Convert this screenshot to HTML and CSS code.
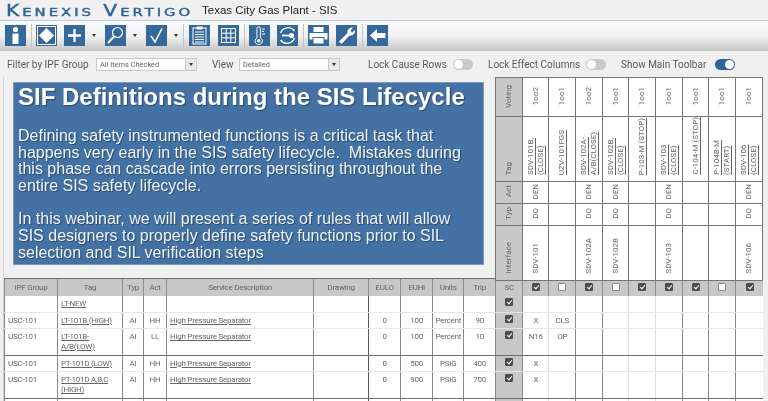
FILE: index.html
```html
<!DOCTYPE html>
<html lang="en">
<head>
<meta charset="utf-8">
<title>Kenexis Vertigo</title>
<link rel="stylesheet" href="styles.css">
</head>
<body>
<header class="titlebar">
  <span class="logo-box"><span class="logo">Kenexis Vertigo</span></span>
  <span class="plant">Texas City Gas Plant - SIS</span>
</header>
<nav class="toolbar">
  <span class="tool"><svg viewBox="0 0 21 21"><circle cx="10.5" cy="4.5" r="2.6" fill="#fff"/><rect x="7.5" y="8.5" width="6" height="10.5" fill="#fff"/></svg></span>
  <span class="sep sep-first"></span>
  <span class="tool"><svg viewBox="0 0 21 21"><rect x="1.5" y="1.5" width="18" height="18" fill="none" stroke="#fff"/><path d="M10.500 3 18 10.500 10.500 18 3 10.500Z" fill="#fff"/></svg></span>
  <span class="tool tool-gap"><svg viewBox="0 0 21 21"><path d="M9.300 4h2.400v5.300H17v2.400h-5.300V17H9.300v-5.300H4V9.300h5.300Z" fill="#fff"/></svg></span>
  <span class="caret"></span>
  <span class="tool tool-drop"><svg viewBox="0 0 21 21"><circle cx="12.500" cy="7.500" r="5" fill="none" stroke="#fff" stroke-width="1.2"/><path d="M9 11.500 3 18" stroke="#fff" stroke-width="2"/></svg></span>
  <span class="caret"></span>
  <span class="tool tool-drop"><svg viewBox="0 0 21 21"><path d="M5 11 9 17 16 3.500" fill="none" stroke="#fff" stroke-width="1.6"/></svg></span>
  <span class="caret"></span>
  <span class="sep sep-wide"></span>
  <span class="tool"><svg viewBox="0 0 21 21"><rect x="4" y="3" width="13" height="16" fill="none" stroke="#fff"/><rect x="7.500" y="1.500" width="6" height="3" fill="#fff"/><path d="M6 7h9M6 9.500h9M6 12h9M6 14.500h9M6 17h9" stroke="#fff"/></svg></span>
  <span class="tool tool-gap-wide"><svg viewBox="0 0 21 21"><path d="M3.500 3.500h14v14h-14ZM8.200 3.500v14M12.800 3.500v14M3.500 8.200h14M3.500 12.800h14" fill="none" stroke="#fff"/></svg></span>
  <span class="sep"></span>
  <span class="tool"><svg viewBox="0 0 21 21"><path d="M8 3.500a1.700 1.700 0 0 1 3.400 0v9.300a3.600 3.600 0 1 1-3.400 0Z" fill="none" stroke="#fff"/><circle cx="9.700" cy="15.800" r="1.800" fill="#fff"/><path d="M13 4h3M13 6.500h2M13 9h3" stroke="#fff"/></svg></span>
  <span class="tool tool-gap"><svg viewBox="0 0 21 21"><path d="M3.500 8A8 8 0 0 1 17.500 6M17.500 13A8 8 0 0 1 3.500 15" fill="none" stroke="#fff" stroke-width="1.300"/><circle cx="14.500" cy="10.500" r="2.600" fill="#fff"/><path d="M5 10.500h8" stroke="#fff" stroke-width="1.800"/></svg></span>
  <span class="sep"></span>
  <span class="tool"><svg viewBox="0 0 21 21"><rect x="5.500" y="2" width="10" height="5" fill="#fff"/><path d="M1.500 8h18v6.500h-3V12H4.500v2.500h-3Z" fill="#fff"/><rect x="5.500" y="13" width="10" height="5.500" fill="#fff"/></svg></span>
  <span class="tool tool-gap"><svg viewBox="0 0 21 21"><path d="M3 16.500 11.500 8C11 5 13.500 2 17 2.500L14.500 5.500 16 7.500 19 5C19.500 8.500 16.500 11 13.500 10.500L5.500 19Z" fill="#fff"/></svg></span>
  <span class="sep"></span>
  <span class="tool"><svg viewBox="0 0 21 21"><path d="M3 10.500 10 4v4h8.500v5H10v4Z" fill="#fff"/></svg></span>
</nav>
<section class="filters">
  <span class="label label-filter">Filter by IPF Group</span>
  <span class="select"><span class="select-text">All Items Checked</span><span class="select-btn"></span></span>
  <span class="label label-view">View</span>
  <span class="select"><span class="select-text">Detailed</span><span class="select-btn"></span></span>
  <span class="label label-lock">Lock Cause Rows</span>
  <span class="toggle"></span>
  <span class="label label-effect">Lock Effect Columns</span>
  <span class="toggle"></span>
  <span class="label label-show">Show Main Toolbar</span>
  <span class="toggle toggle-on"></span>
</section>
<main class="sheet">
  <section class="top">
    <div class="banner-area">
      <article class="banner">
        <h1>SIF Definitions during the SIS Lifecycle</h1>
        <p>Defining safety instrumented functions is a critical task that happens very early in the SIS safety lifecycle.&nbsp; Mistakes during this phase can cascade into errors persisting throughout the entire SIS safety lifecycle.</p>
        <p>In this webinar, we will present a series of rules that will allow SIS designers to properly define safety functions prior to SIL selection and SIL verification steps</p>
      </article>
    </div>
    <table class="matrix">
      <colgroup>
        <col class="w27"><col class="w26"><col class="w27"><col class="w27"><col class="w26"><col class="w27"><col class="w27"><col class="w26"><col class="w27"><col class="w27">
      </colgroup>
      <tr class="r-voting">
        <th><span class="v">Voting</span></th>
        <td><span class="v">1oo2</span></td><td><span class="v">1oo1</span></td><td><span class="v">1oo2</span></td><td><span class="v">1oo1</span></td><td><span class="v">1oo1</span></td><td><span class="v">1oo1</span></td><td><span class="v">1oo1</span></td><td><span class="v">1oo1</span></td><td><span class="v">1oo1</span></td>
      </tr>
      <tr class="r-tag">
        <th><span class="v">Tag</span></th>
        <td><span class="v u">SDV-101B, (CLOSE)</span></td><td><span class="v u">UZV-101FGS</span></td><td><span class="v u">SDV-102A-A/B(CLOSE)</span></td><td><span class="v u">SDV-102B, (CLOSE)</span></td><td><span class="v u">P-103-M (STOP)</span></td><td><span class="v u">SDV-103 (CLOSE)</span></td><td><span class="v u">C-104-M (STOP)</span></td><td><span class="v u">P-104B-M (START)</span></td><td><span class="v u">SDV-106 (CLOSE)</span></td>
      </tr>
      <tr class="r-short">
        <th><span class="v">Act</span></th>
        <td><span class="v">DEN</span></td><td></td><td><span class="v">DEN</span></td><td><span class="v">DEN</span></td><td></td><td><span class="v">DEN</span></td><td></td><td></td><td><span class="v">DEN</span></td>
      </tr>
      <tr class="r-short">
        <th><span class="v">Typ</span></th>
        <td><span class="v">DO</span></td><td></td><td><span class="v">DO</span></td><td><span class="v">DO</span></td><td></td><td><span class="v">DO</span></td><td></td><td></td><td><span class="v">DO</span></td>
      </tr>
      <tr class="r-iface">
        <th><span class="v">Interface</span></th>
        <td><span class="v">SDV-101</span></td><td></td><td><span class="v">SDV-102A</span></td><td><span class="v">SDV-102B</span></td><td></td><td><span class="v">SDV-103</span></td><td></td><td></td><td><span class="v">SDV-106</span></td>
      </tr>
    </table>
  </section>
  <table class="grid">
    <colgroup>
      <col class="c-group"><col class="c-tag"><col class="c-typ"><col class="c-act"><col class="c-desc"><col class="c-draw"><col class="c-num"><col class="c-num"><col class="c-units"><col class="c-num">
      <col class="w27"><col class="w26"><col class="w27"><col class="w27"><col class="w26"><col class="w27"><col class="w27"><col class="w26"><col class="w27"><col class="w27">
    </colgroup>
    <thead>
      <tr>
        <th>IPF Group</th><th>Tag</th><th>Typ</th><th>Act</th><th>Service Description</th><th>Drawing</th><th>EULO</th><th>EUHI</th><th>Units</th><th>Trip</th>
        <th>SC</th>
        <th class="chk"><i class="box on"></i></th><th class="chk"><i class="box"></i></th><th class="chk"><i class="box on"></i></th><th class="chk"><i class="box"></i></th><th class="chk"><i class="box on"></i></th><th class="chk"><i class="box on"></i></th><th class="chk"><i class="box on"></i></th><th class="chk"><i class="box"></i></th><th class="chk"><i class="box on"></i></th>
      </tr>
    </thead>
    <tbody>
      <tr class="row-s">
        <td class="l"></td><td class="l"><u>LT-NEW</u></td><td></td><td></td><td class="l"></td><td></td><td></td><td></td><td></td><td></td>
        <td class="sc"><i class="box on"></i></td><td></td><td></td><td></td><td></td><td></td><td></td><td></td><td></td><td></td>
      </tr>
      <tr class="row-s">
        <td class="l">USC-101</td><td class="l"><u>LT-101B (HIGH)</u></td><td>AI</td><td>HH</td><td class="l"><u>High Pressure Separator</u></td><td></td><td>0</td><td>100</td><td>Percent</td><td>90</td>
        <td class="sc"><i class="box on"></i></td><td>X</td><td>CLS</td><td></td><td></td><td></td><td></td><td></td><td></td><td></td>
      </tr>
      <tr class="row-t end">
        <td class="l">USC-101</td><td class="l"><u>LT-101B-A/B(LOW)</u></td><td>AI</td><td>LL</td><td class="l"><u>High Pressure Separator</u></td><td></td><td>0</td><td>100</td><td>Percent</td><td>10</td>
        <td class="sc"><i class="box on"></i></td><td>N16</td><td>OP</td><td></td><td></td><td></td><td></td><td></td><td></td><td></td>
      </tr>
      <tr class="row-s">
        <td class="l">USC-101</td><td class="l"><u>PT-101D (LOW)</u></td><td>AI</td><td>HH</td><td class="l"><u>High Pressure Separator</u></td><td></td><td>0</td><td>500</td><td>PSIG</td><td>400</td>
        <td class="sc"><i class="box on"></i></td><td>X</td><td></td><td></td><td></td><td></td><td></td><td></td><td></td><td></td>
      </tr>
      <tr class="row-t end">
        <td class="l">USC-101</td><td class="l"><u>PT-101D A,B,C (HIGH)</u></td><td>AI</td><td>HH</td><td class="l"><u>High Pressure Separator</u></td><td></td><td>0</td><td>900</td><td>PSIG</td><td>700</td>
        <td class="sc"><i class="box on"></i></td><td>X</td><td></td><td></td><td></td><td></td><td></td><td></td><td></td><td></td>
      </tr>
      <tr class="row-s">
        <td></td><td></td><td></td><td></td><td></td><td></td><td></td><td></td><td></td><td></td>
        <td class="sc"></td><td></td><td></td><td></td><td></td><td></td><td></td><td></td><td></td><td></td>
      </tr>
    </tbody>
  </table>
</main>
</body>
</html>
```

FILE: styles.css
```css
* { box-sizing: border-box; }
html, body { height: 100%; }
body {
  margin: 0;
  background: #f0f0f0;
  font-family: Roboto, "Open Sans", sans-serif;
  color: #666;
  overflow: hidden;
  filter: blur(0.35px);
}

.titlebar {
  height: 21px;
  padding: 0 0 0 6px;
  display: flex;
  align-items: center;
  border-bottom: 1px solid #bccbdc;
}
.logo-box { width: 196px; flex: none; }
.logo {
  display: inline-block;
  font-family: "DejaVu Sans", sans-serif;
  font-size: 15px;
  font-weight: 400;
  font-variant: small-caps;
  letter-spacing: 2.2px;
  color: #2f6597;
  -webkit-text-stroke: 0.4px #2f6597;
  white-space: nowrap;
  transform: scaleX(1.35);
  transform-origin: left center;
}
.plant {
  font-family: "Liberation Sans", sans-serif;
  font-size: 11.5px;
  color: #222;
}

.toolbar {
  height: 30px;
  padding: 4px 0 0 5px;
  display: flex;
  align-items: flex-start;
  background: linear-gradient(#fbfbfb 0%, #f1f1f1 50%, #c6c6c6 100%);
}
.tool {
  width: 21px;
  height: 21px;
  flex: none;
  background: #36699b;
}
.tool svg { display: block; width: 21px; height: 21px; }
.tool-gap { margin-left: 7px; }
.tool-gap-wide { margin-left: 8px; }
.tool-drop { margin-left: 9px; }
.caret {
  margin: 9px 0 0 7px;
  width: 0;
  height: 0;
  border: 2.5px solid transparent;
  border-top: 3px solid #333;
}
.sep {
  width: 1px;
  height: 24px;
  margin: -1px 4px 0 5px;
  background: #c4c4c4;
  flex: none;
}
.sep-first { margin-right: 4px; }
.sep-wide { margin-right: 5px; }

.filters {
  height: 26px;
  padding: 0 0 0 7px;
  display: flex;
  align-items: center;
}
.label { font-size: 10px; color: #5a5a5a; white-space: nowrap; flex: none; }
.label-filter { width: 89px; }
.label-view { width: 27px; margin-left: 15px; }
.label-lock { width: 85px; margin-left: 28px; }
.label-effect { width: 98px; margin-left: 15px; }
.label-show { width: 94px; margin-left: 15px; }
.select {
  width: 101px;
  height: 13px;
  flex: none;
  display: flex;
  background: #fff;
  border: 1px solid #c9c9c9;
}
.select-text {
  flex: 1;
  padding-left: 3px;
  font-size: 7.4px;
  line-height: 11px;
  color: #666;
}
.select-btn {
  width: 11px;
  border-left: 1px solid #c9c9c9;
  background: #e8e8e8;
  position: relative;
}
.select-btn::after {
  content: "";
  position: absolute;
  left: 3px;
  top: 4px;
  border: 2px solid transparent;
  border-top: 3px solid #333;
}
.toggle {
  width: 20px;
  height: 11px;
  flex: none;
  border-radius: 6px;
  background: #c8c8c8;
  position: relative;
}
.toggle::after {
  content: "";
  position: absolute;
  left: 1px;
  top: 1px;
  width: 9px;
  height: 9px;
  border-radius: 50%;
  background: #fff;
}
.toggle-on { background: #2f6597; }
.toggle-on::after { left: 10px; }

.sheet {
  margin-left: 3px;
  width: 759px;
  border-left: 1px solid #d2d2d2;
}
.top { display: flex; height: 201px; }
.banner-area { width: 491px; padding: 5px 11px 0 9px; flex: none; }
.banner {
  height: 183px;
  padding: 1px 4px 0 4px;
  background: #4472a4;
  border: 1px solid #7d9cbd;
  color: #f2f5f8;
  font-family: "Liberation Sans", sans-serif;
  text-shadow: 1px 1px 1px #2a4a6e;
}
.banner h1 {
  margin: 0 0 18px;
  font-size: 24px;
  line-height: 26px;
  font-weight: 700;
  color: #fff;
}
.banner p {
  margin: 0 0 16.500px;
  font-size: 16px;
  line-height: 16.700px;
}

table { border-collapse: collapse; table-layout: fixed; }
.w27 { width: 27px; }
.w26 { width: 26px; }

.matrix {
  width: 267px;
  flex: none;
  height: 201px;
  background: #fff;
  font-size: 8px;
  color: #666;
}
.matrix th, .matrix td {
  padding: 0 0 4px;
  border: 1px solid #757575;
  vertical-align: bottom;
  text-align: center;
  font-weight: 400;
}
.matrix th { background: #c8c8c8; }
.r-voting { height: 39px; }
.r-voting td, .r-voting th { vertical-align: middle; padding: 0; }
.r-tag { height: 63px; }
.r-short { height: 22px; }
.r-short td, .r-short th { vertical-align: middle; padding: 0; }
.r-iface { height: 55px; }
.v {
  display: inline-block;
  writing-mode: vertical-rl;
  transform: rotate(180deg);
  line-height: 10px;
  max-height: 58px;
  text-align: left;
}
.u { text-decoration: underline; }

.grid {
  width: 759px;
  font-size: 8px;
  letter-spacing: -0.25px;
  color: #666;
  background: #fff;
}
.c-group { width: 53px; }
.c-tag { width: 65px; }
.c-typ { width: 21px; }
.c-act { width: 23px; }
.c-desc { width: 147px; }
.c-draw { width: 55px; }
.c-num { width: 32px; }
.c-units { width: 31px; }
.grid th {
  height: 17px;
  padding: 0;
  font-weight: 400;
  background: #c8c8c8;
  border-top: 1px solid #6e6e6e;
  border-left: 1px solid #8e8e8e;
}
.grid td {
  padding: 3px 1px 0;
  text-align: center;
  vertical-align: top;
  line-height: 10px;
  border-left: 1px solid #8a8a8a;
  border-bottom: 1px solid #e6e6e6;
}
.grid td.l { text-align: left; padding-left: 3px; }
.grid td:nth-child(7) { border-left-color: #555; }
.grid td:nth-child(13), .grid td:nth-child(16), .grid td:nth-child(17) { border-left-color: #ddd; }
.grid .sc { background: #c8c8c8; padding-top: 2px; }
.grid u { text-decoration: underline; }
.row-s { height: 16.600px; }
.row-t { height: 26.600px; }
.end td { border-bottom: 1px solid #6e6e6e; }
.chk { padding-top: 1px; }
.box {
  display: inline-block;
  width: 8px;
  height: 8px;
  border-radius: 1px;
  background: #fff;
  border: 1px solid #888;
  position: relative;
  vertical-align: top;
}
.box.on { background: #4d4d4d; border-color: #4d4d4d; }
.box.on::after {
  content: "";
  position: absolute;
  left: 2px;
  top: 0;
  width: 2px;
  height: 4px;
  border: solid #fff;
  border-width: 0 1px 1px 0;
  transform: rotate(40deg);
}
```
